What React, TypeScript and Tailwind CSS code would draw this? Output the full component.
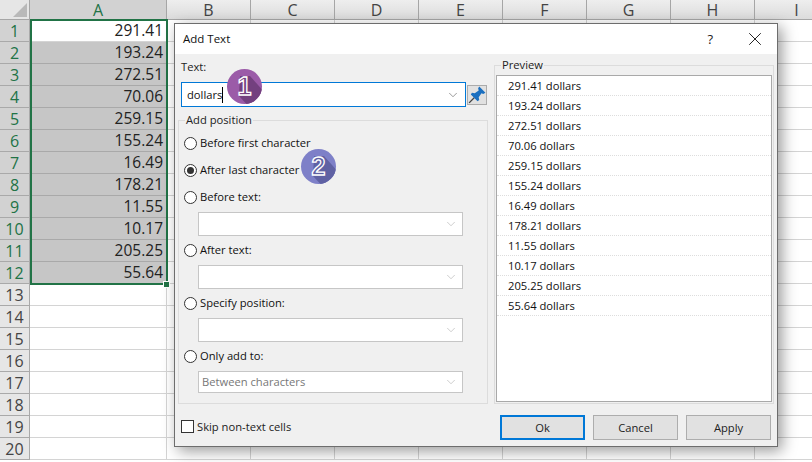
import { ChevronDown, X } from "lucide-react";

const VALUES = [
  "291.41", "193.24", "272.51", "70.06", "259.15", "155.24",
  "16.49", "178.21", "11.55", "10.17", "205.25", "55.64",
];
const COLUMNS = ["B", "C", "D", "E", "F", "G", "H", "I"];
const ROWS = Array.from({ length: 20 }, (_, i) => i + 1);

function Sheet() {
  return (
    <div className="font-['Open_Sans',sans-serif] text-[#333]">
      <div className="flex h-[20px]">
        <div className="flex w-[30px] shrink-0 items-end justify-end border-r border-b border-[#a6a6a6] bg-[#e6e6e6] p-[2px]">
          <svg width="14" height="14" viewBox="0 0 14 14">
            <polygon points="14,0 14,14 0,14" fill="#b9b9b9" />
          </svg>
        </div>
        <div className="flex w-[137px] shrink-0 items-center justify-center border-r border-b border-[#a6a6a6] bg-[#d2d2d2] text-[16px] text-[#217346]">
          A
        </div>
        {COLUMNS.map((c) => (
          <div
            key={c}
            className="flex w-[84px] shrink-0 items-center justify-center border-r border-b border-[#a6a6a6] bg-linear-to-b from-[#eeeeee] to-[#dcdcdc] text-[16px] text-[#444]"
          >
            {c}
          </div>
        ))}
      </div>
      {ROWS.map((r) => {
        const value = VALUES[r - 1];
        return (
          <div key={r} className="flex h-[22px]">
            <div
              className={`flex w-[30px] shrink-0 items-center justify-center border-r border-b border-[#a9a9a9] text-[16px] ${
                value ? "bg-[#d2d2d2] text-[#217346]" : "bg-[#e6e6e6] text-[#444]"
              }`}
            >
              {r}
            </div>
            <div
              className={`flex w-[137px] shrink-0 items-center justify-end border-r border-b pr-[3px] text-[15.5px] text-[#222] ${
                value && r > 1 ? "border-[#a9a9a9] bg-[#c6c6c6]" : "border-[#d4d4d4] bg-white"
              }`}
            >
              {value}
            </div>
            {COLUMNS.map((c) => (
              <div key={c} className="w-[84px] shrink-0 border-r border-b border-[#d4d4d4]" />
            ))}
          </div>
        );
      })}
    </div>
  );
}

function Radio({ label, checked }: { label: string; checked?: boolean }) {
  return (
    <div className="flex h-[16px] items-center">
      <span className="flex h-[13px] w-[13px] shrink-0 items-center justify-center rounded-full border border-[#333] bg-white">
        {checked && <span className="h-[7px] w-[7px] rounded-full bg-[#333]" />}
      </span>
      <span className="ml-[3px] text-[#111]">{label}</span>
    </div>
  );
}

function Combo({ value, short }: { value?: string; short?: boolean }) {
  return (
    <div
      className={`ml-[14px] mt-[7px] flex w-[265px] items-center justify-between border border-[#c6c6c6] bg-white pl-[3px] pr-[4px] text-[#777] ${
        short ? "h-[22px]" : "h-[24px]"
      }`}
    >
      <span>{value}</span>
      <ChevronDown size={14} strokeWidth={1} className="text-[#aaa]" />
    </div>
  );
}

function Badge({ n, bg, dark, className }: { n: string; bg: string; dark: string; className: string }) {
  return (
    <div
      className={`absolute flex h-[35px] w-[35px] items-center justify-center overflow-hidden rounded-full ${className}`}
      style={{ background: bg }}
    >
      <svg className="absolute inset-0" width="35" height="35" viewBox="0 0 35 35">
        <polygon points="13,7 23,7 40,26 40,40 24,40 12,27" fill={dark} />
      </svg>
      <span className="relative font-['Liberation_Sans',sans-serif] text-[25px] font-bold leading-none text-transparent [-webkit-text-stroke:1.3px_white]">
        {n}
      </span>
    </div>
  );
}

function PinIcon() {
  return (
    <svg width="18" height="18" viewBox="0 0 16 16">
      <path d="M1 15 L5.5 10.5" stroke="#444" strokeWidth="1.2" />
      <path d="M10 0.5 L15.5 6 L13.5 7 L12 6.5 L9.5 10 L10 12.5 L8.5 13.5 L2.5 7.5 L3.5 6 L6 6.5 L9.5 4 L9 2 Z" fill="#1a6fc0" />
    </svg>
  );
}

function Dialog() {
  return (
    <div className="absolute left-[174px] top-[23px] flex h-[424px] w-[604px] flex-col border border-[#6d6d6d] bg-[#f0f0f0] font-['Open_Sans',sans-serif] text-[11.2px] leading-[16px] text-[#222] shadow-[4px_4px_14px_rgba(0,0,0,0.4)]">
      <div className="flex h-[30px] shrink-0 items-center bg-white pl-[8px]">
        <span className="text-[11.5px] text-[#111]">Add Text</span>
        <span className="ml-auto mr-[31px] text-[13px] text-[#222]">?</span>
        <X size={22} strokeWidth={1} className="mr-[11px] text-[#111]" />
      </div>

      <div className="flex pl-[3px] pt-[5px]">
        {/* left column */}
        <div className="w-[316px] shrink-0">
          <div className="pl-[3px]">Text:</div>
          <div className="ml-[3px] mt-[7px] flex items-center">
            <div className="flex h-[25px] w-[285px] items-center border border-[#0078d7] bg-white pl-[5px] pr-[5px]">
              <span className="text-[#111]">dollars</span>
              <span className="h-[16px] w-px bg-black" />
              <ChevronDown size={14} strokeWidth={1} className="ml-auto text-[#555]" />
            </div>
            <div className="ml-px flex h-[20px] w-[20px] items-center justify-center border border-[#ababab] bg-[#e1e1e1]">
              <PinIcon />
            </div>
          </div>

          <div className="relative mt-[13px] h-[284px] w-[310px] border border-[#dcdcdc] pl-[5px] pt-[14px]">
            <span className="absolute left-[6px] top-[-9px] bg-[#f0f0f0] px-px">Add position</span>
            <Radio label="Before first character" />
            <div className="mt-[11px]"><Radio label="After last character" checked /></div>
            <div className="mt-[11px]"><Radio label="Before text:" /></div>
            <Combo />
            <div className="mt-[6px]"><Radio label="After text:" /></div>
            <Combo />
            <div className="mt-[6px]"><Radio label="Specify position:" /></div>
            <Combo />
            <div className="mt-[6px]"><Radio label="Only add to:" /></div>
            <Combo value="Between characters" short />
          </div>
        </div>

        {/* preview */}
        <div className="relative mt-[6px] h-[339px] w-[280px] shrink-0 border border-[#dcdcdc] pb-px pl-px pt-[9px]">
          <span className="absolute left-[6px] top-[-9px] bg-[#f0f0f0] px-px">Preview</span>
          <div className="h-full w-[276px] border border-[#a9a9a9] bg-white">
            {VALUES.map((v) => (
              <div
                key={v}
                className="flex h-[20px] items-center border-b border-dotted border-[#dddddd] pl-[11px] text-[#111]"
              >
                {v} dollars
              </div>
            ))}
          </div>
        </div>
      </div>

      <div className="mt-[11px] flex items-center pl-[6px] pr-[6px]">
        <div className="mb-[2px] flex items-center">
          <span className="h-[13px] w-[13px] border border-[#333] bg-white" />
          <span className="ml-[3px]">Skip non-text cells</span>
        </div>
        <div className="ml-auto flex gap-[8px]">
          <button className="h-[25px] w-[85px] border-2 border-[#0078d7] bg-[#e1e1e1] text-[#222]">Ok</button>
          <button className="h-[25px] w-[85px] border border-[#adadad] bg-[#e1e1e1] text-[#222]">Cancel</button>
          <button className="h-[25px] w-[85px] border border-[#adadad] bg-[#e1e1e1] text-[#222]">Apply</button>
        </div>
      </div>
    </div>
  );
}

export default function App() {
  return (
    <div className="relative h-[462px] w-[812px] overflow-hidden bg-white">
      <Sheet />
      {/* selection outline over column A */}
      <div className="absolute left-[30px] top-[19px] h-[266px] w-[138px] border-2 border-[#217346]" />
      <div className="absolute left-[163px] top-[281px] h-[7px] w-[7px] border border-white bg-[#217346]" />
      <Dialog />
      <Badge n="1" bg="#9b5ba8" dark="#73407f" className="left-[227px] top-[69px]" />
      <Badge n="2" bg="#7e80c8" dark="#5f61a3" className="left-[301px] top-[149px]" />
    </div>
  );
}
